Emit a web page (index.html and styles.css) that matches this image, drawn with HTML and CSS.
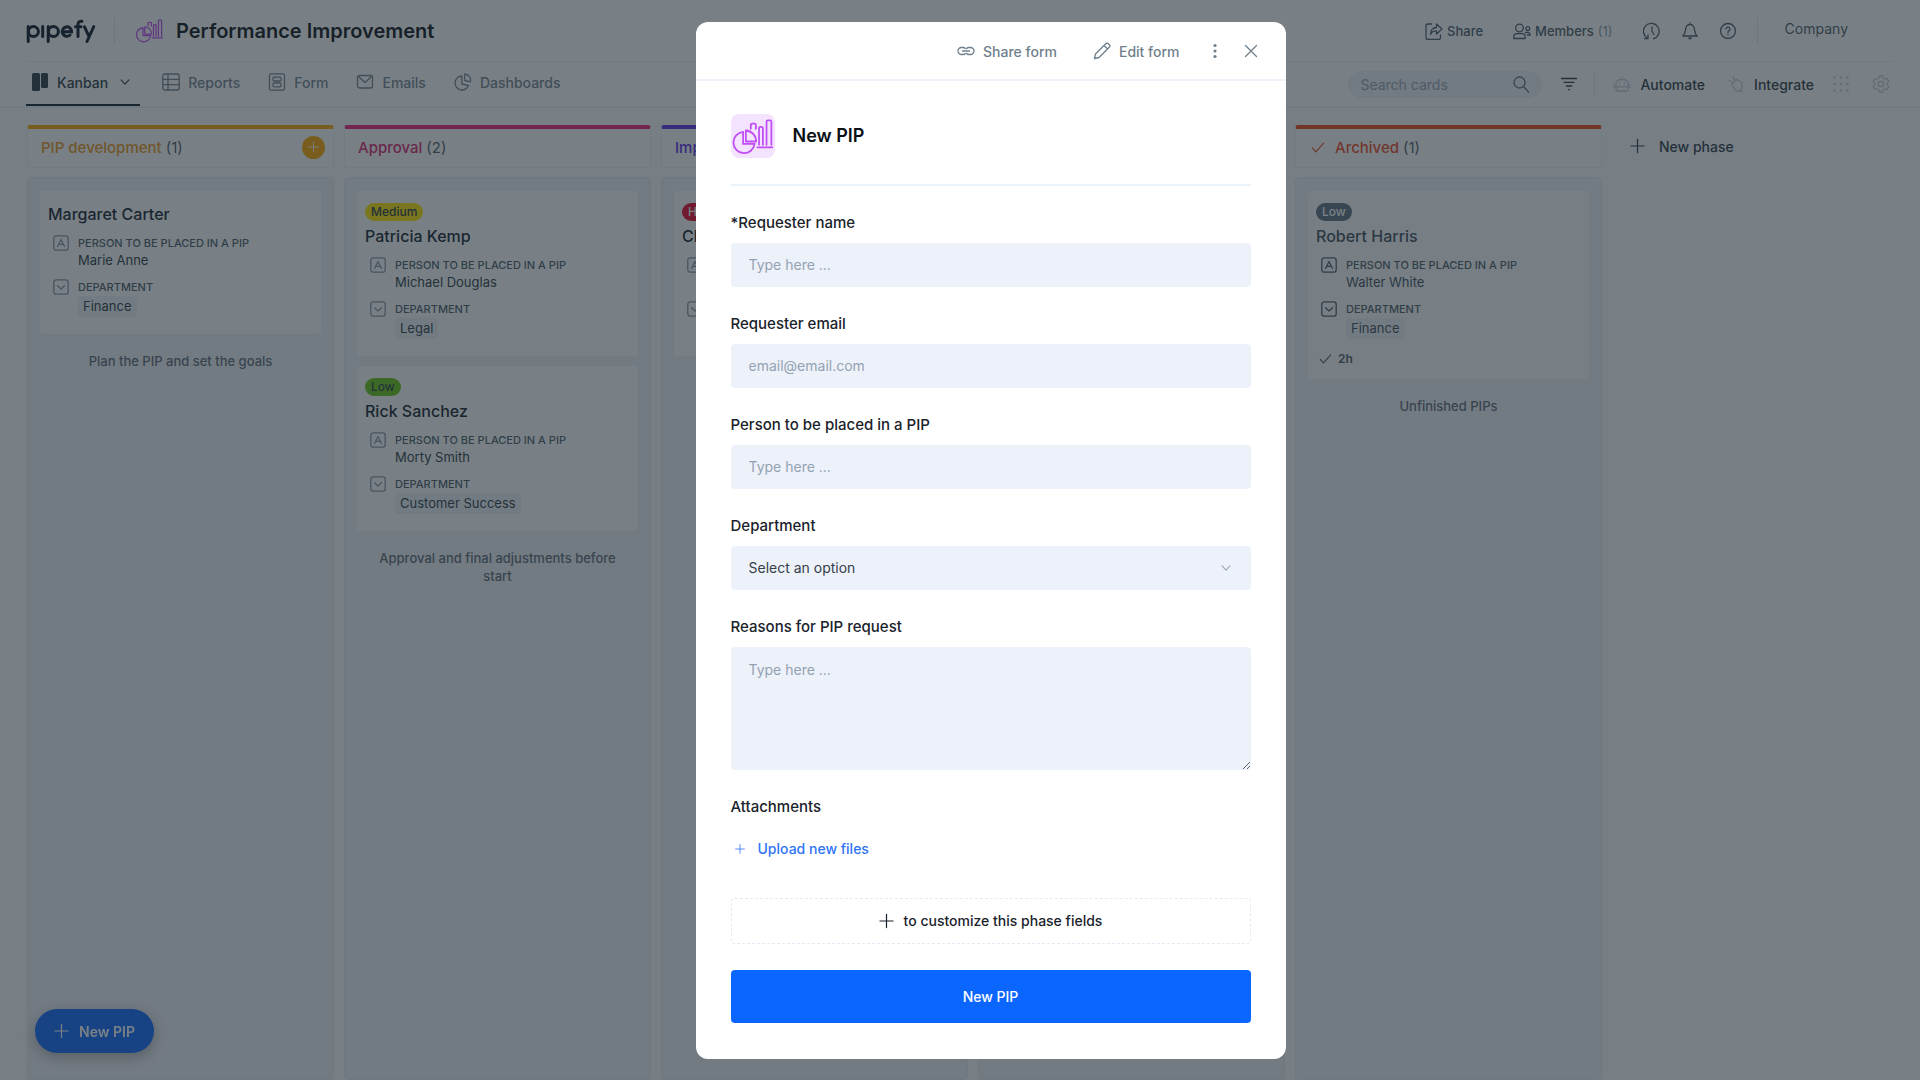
FILE: index.html
```html
<!DOCTYPE html>
<html lang="en">
<head>
    <meta charset="UTF-8">
    <meta name="viewport" content="width=device-width, initial-scale=1.0">
    <title>Performance Improvement - Pipefy</title>
    <link rel="stylesheet" href="styles.css">
</head>
<body>
    <!-- icons used more than once -->
    <svg class="sprite" aria-hidden="true">
        <symbol id="i-plus" viewBox="0 0 16 16"><path d="M8 1v14M1 8h14"/></symbol>
        <symbol id="i-check" viewBox="0 0 16 16"><path d="M1.500 9l4 4.500L14.500 3.500"/></symbol>
        <symbol id="i-chevron" viewBox="0 0 16 16"><path d="M3.500 5.500L8 10.500l4.500-5"/></symbol>
        <symbol id="i-text" viewBox="0 0 16 16"><rect x=".8" y=".8" width="14.400" height="14.400" rx="2.500"/><path d="M4.500 11.500L8 4.500l3.500 7M5.800 9.300h4.400"/></symbol>
        <symbol id="i-select" viewBox="0 0 16 16"><rect x=".8" y=".8" width="14.400" height="14.400" rx="2.500"/><path d="M4.500 6.800L8 10l3.500-3.200"/></symbol>
        <symbol id="i-pipe" viewBox="0 0 40 40"><path d="M11 16.200a9.700 9.700 0 1 0 10.500 11H11z"/><path d="M13.500 15v10h9.300A9.800 9.800 0 0 0 13.500 15z"/><path d="M18 13.500V10a1.300 1.300 0 0 1 1.300-1.300h2A1.300 1.300 0 0 1 22.600 10v3.500"/><path d="M25.500 28V13a1.200 1.200 0 0 1 1.200-1.200h1.100A1.200 1.200 0 0 1 29 13V28M32.300 28V7a1.300 1.300 0 0 1 1.300-1.300h1.800A1.300 1.300 0 0 1 36.700 7V28M24 30.300h13.500"/></symbol>
    </svg>

    <div class="page">
        <header class="topbar">
            <div class="topbar-row">
                <a href="#" class="logo" aria-label="pipefy">
                    <svg viewBox="0 0 70 26" fill="none" stroke="currentColor" stroke-width="3" stroke-linecap="round">
                        <path d="M2.200 8.500V23.500M16.700 8.500v10M22.200 8.500v15"/>
                        <circle cx="7.400" cy="13.500" r="5"/><circle cx="27.400" cy="13.500" r="5"/>
                        <path d="M36.600 13.700h9a4.700 4.700 0 1 0-1.500 3.300M52 18.500V6.500Q52 3 56 3.200M49.500 8.800h5.500M58.500 8.800l4.200 9M67.800 8.500L61 23.500"/>
                    </svg>
                </a>
                <span class="divider"></span>
                <svg class="icon pipe-icon"><use href="#i-pipe"/></svg>
                <h1>Performance Improvement</h1>
                <div class="actions">
                    <button type="button"><svg class="icon" viewBox="0 0 18 18"><path d="M6.500 2H3a2 2 0 0 0-2 2v11.500a2 2 0 0 0 2 2h10.500a2 2 0 0 0 2-2V13"/><path d="M5.500 12.500C5.500 8 7.500 5.500 11.500 5.500V2l5.500 5-5.500 5V8.800c-3 0-5 1-6 3.700z"/></svg>Share</button>
                    <button type="button" class="members"><svg class="icon" viewBox="0 0 18 18"><circle cx="6.500" cy="6" r="3.800"/><path d="M.8 16.500V15c0-2.300 1.700-3.300 3.200-3.300h5c1.500 0 3.200 1 3.200 3.300v1.500z"/><circle cx="14.800" cy="6.500" r="1.900"/><path d="M12.300 10.800c1.500-1 5-.8 5 2.200h-3"/></svg>Members <span class="muted">(1)</span></button>
                    <button type="button" aria-label="Activity"><svg class="icon" viewBox="0 0 18 18"><path d="M5 16.300A7.800 7.800 0 1 1 10.500 16.700M1.500 16.700H5V13M9 5v4.500l2 3"/></svg></button>
                    <button type="button" aria-label="Notifications"><svg class="icon" viewBox="0 0 18 18"><path d="M1.800 14c2.400-2 2.200-3.500 2.700-6.500.4-3 2.500-5 4.500-5s4.100 2 4.500 5c.5 3 .3 4.500 2.700 6.500zM9 2.500V1M8 15.800h2v.7H8z"/></svg></button>
                    <button type="button" aria-label="Help"><svg class="icon" viewBox="0 0 18 18"><circle cx="9" cy="9" r="7.500"/><path d="M7 7a2 2 0 1 1 2.800 1.900Q9 9.300 9 10.500M9 12.300v.5"/></svg></button>
                    <span class="divider"></span>
                    <a href="#" class="company">Company</a>
                </div>
            </div>
            <div class="topbar-row tabs-row">
                <nav class="tabs">
                    <a href="#" class="tab active"><svg class="icon solid" viewBox="0 0 18 18"><rect x="1" y="0" width="8" height="18" rx="1.500"/><rect x="10" y="0" width="7" height="15" rx="1.500"/></svg>Kanban<svg class="icon chevron"><use href="#i-chevron"/></svg></a>
                    <a href="#" class="tab"><svg class="icon" viewBox="0 0 18 18"><rect x=".8" y="1" width="16.400" height="16" rx="2"/><path d="M6 1v16M1 6.300h16M1 11.700h16"/></svg>Reports</a>
                    <a href="#" class="tab"><svg class="icon" viewBox="0 0 18 18"><rect x="1.500" y=".8" width="15" height="16.400" rx="1.500"/><rect x="5" y="4.200" width="8" height="3.800" rx="1"/><rect x="5" y="10" width="8" height="3.800" rx="1"/></svg>Form</a>
                    <a href="#" class="tab"><svg class="icon" viewBox="0 0 18 18"><rect x="1.500" y="2.500" width="15" height="12.500" rx="2"/><path d="M2.500 3.500L9 9.500l6.500-6"/></svg>Emails</a>
                    <a href="#" class="tab"><svg class="icon" viewBox="0 0 18 18"><path d="M7.800 3a7 7 0 1 0 6.800 9.500L7.800 11z"/><path d="M10.800 1v6.500l5.700 1.300C17.500 5 15 1.500 10.800 1z"/></svg>Dashboards</a>
                </nav>
                <div class="tools">
                    <label class="search">
                        <input type="search" placeholder="Search cards" aria-label="Search cards">
                        <svg class="icon" viewBox="0 0 18 18"><circle cx="7.500" cy="7.500" r="5.500"/><path d="M11.500 11.500l5 5.500"/></svg>
                    </label>
                    <button type="button" aria-label="Filter"><svg class="icon" viewBox="0 0 18 18"><path d="M1.500 3.500h15M4 7.300h10M6.300 11h5.400M8.700 14.700h.6"/></svg></button>
                    <span class="divider"></span>
                    <button type="button" class="tool"><svg class="icon faint" viewBox="0 0 18 18"><path d="M3 8.500C3 6 5.500 4.500 9 4.500s6 1.500 6 4V14a2 2 0 0 1-2 2H5a2 2 0 0 1-2-2zM1.200 9.500v3M16.800 9.500v3M9 4.500V2.500M6.500 8v1M11.500 8v1M3 11.800h12"/></svg>Automate</button>
                    <button type="button" class="tool"><svg class="icon faint" viewBox="0 0 18 18"><path d="M6 1.500l2 3.500M2 5.500l3.500 2M4.500 9L10 4.500l5 3V13l-2.500 3H9zM13 15l2 2"/></svg>Integrate</button>
                    <button type="button" aria-label="Apps"><svg class="icon faint dots" viewBox="0 0 18 18"><path d="M2.500 2.500h.01M9 2.500h.01M15.500 2.500h.01M2.500 9h.01M9 9h.01M15.500 9h.01M2.500 15.500h.01M9 15.500h.01M15.500 15.500h.01"/></svg></button>
                    <button type="button" class="settings" aria-label="Settings"><svg class="icon faint" viewBox="0 0 18 18"><circle cx="9" cy="9" r="2.700"/><path d="M7.300 1h3.400l.6 2.300 1.600.9 2.300-.7 1.700 2.900-1.700 1.700v1.800l1.700 1.700-1.700 2.900-2.300-.7-1.600.9-.6 2.300H7.300l-.6-2.300-1.600-.9-2.300.7-1.700-2.900 1.700-1.700V8.100L1.100 6.400l1.700-2.900 2.300.7 1.600-.9z"/></svg></button>
                </div>
            </div>
        </header>

        <main class="board">
            <section class="phase">
                <header class="phase-head orange">
                    <h2>PIP development <span>(1)</span></h2>
                    <button type="button" class="add" aria-label="Add card"><svg class="icon"><use href="#i-plus"/></svg></button>
                </header>
                <div class="phase-body">
                    <article class="card">
                        <h3>Margaret Carter</h3>
                        <dl>
                            <dt><svg class="icon"><use href="#i-text"/></svg>Person to be placed in a PIP</dt>
                            <dd>Marie Anne</dd>
                            <dt><svg class="icon"><use href="#i-select"/></svg>Department</dt>
                            <dd><span class="chip">Finance</span></dd>
                        </dl>
                    </article>
                    <p class="hint">Plan the PIP and set the goals</p>
                </div>
            </section>

            <section class="phase">
                <header class="phase-head pink">
                    <h2>Approval <span>(2)</span></h2>
                </header>
                <div class="phase-body">
                    <article class="card">
                        <span class="tag medium">Medium</span>
                        <h3>Patricia Kemp</h3>
                        <dl>
                            <dt><svg class="icon"><use href="#i-text"/></svg>Person to be placed in a PIP</dt>
                            <dd>Michael Douglas</dd>
                            <dt><svg class="icon"><use href="#i-select"/></svg>Department</dt>
                            <dd><span class="chip">Legal</span></dd>
                        </dl>
                    </article>
                    <article class="card">
                        <span class="tag low">Low</span>
                        <h3>Rick Sanchez</h3>
                        <dl>
                            <dt><svg class="icon"><use href="#i-text"/></svg>Person to be placed in a PIP</dt>
                            <dd>Morty Smith</dd>
                            <dt><svg class="icon"><use href="#i-select"/></svg>Department</dt>
                            <dd><span class="chip">Customer Success</span></dd>
                        </dl>
                    </article>
                    <p class="hint">Approval and final adjustments before start</p>
                </div>
            </section>

            <section class="phase">
                <header class="phase-head purple">
                    <h2>Imp</h2>
                </header>
                <div class="phase-body">
                    <article class="card">
                        <span class="tag high">High</span>
                        <h3>Cl</h3>
                        <dl>
                            <dt><svg class="icon"><use href="#i-text"/></svg></dt>
                            <dd></dd>
                            <dt><svg class="icon"><use href="#i-select"/></svg></dt>
                            <dd class="chip-row"></dd>
                        </dl>
                    </article>
                </div>
            </section>

            <section class="phase">
                <header class="phase-head"></header>
                <div class="phase-body"></div>
            </section>

            <section class="phase">
                <header class="phase-head red">
                    <svg class="icon"><use href="#i-check"/></svg>
                    <h2>Archived <span>(1)</span></h2>
                </header>
                <div class="phase-body">
                    <article class="card done">
                        <span class="tag grey">Low</span>
                        <h3>Robert Harris</h3>
                        <dl>
                            <dt><svg class="icon"><use href="#i-text"/></svg>Person to be placed in a PIP</dt>
                            <dd>Walter White</dd>
                            <dt><svg class="icon"><use href="#i-select"/></svg>Department</dt>
                            <dd><span class="chip">Finance</span></dd>
                        </dl>
                        <p class="time"><svg class="icon"><use href="#i-check"/></svg>2h</p>
                    </article>
                    <p class="hint">Unfinished PIPs</p>
                </div>
            </section>

            <button type="button" class="new-phase"><svg class="icon"><use href="#i-plus"/></svg>New phase</button>
        </main>

        <button type="button" class="fab"><svg class="icon"><use href="#i-plus"/></svg>New PIP</button>
    </div>

    <div class="overlay">
        <div class="modal" role="dialog" aria-modal="true" aria-labelledby="modal-title">
            <div class="modal-bar">
                <button type="button" class="text-btn"><svg class="icon" viewBox="0 0 18 18"><path d="M8.300 11.500c-.6.800-1.200 1-2 1H4.500a3.500 3.500 0 0 1 0-7h1.800c.8 0 1.400.2 2 1M9.700 11.500c.6.800 1.200 1 2 1h1.800a3.500 3.500 0 0 0 0-7h-1.800c-.8 0-1.400.2-2 1M5.500 9h7"/></svg>Share form</button>
                <button type="button" class="text-btn"><svg class="icon" viewBox="0 0 18 18"><path d="M1.500 16.500l1-4.500L13 1.500a1.500 1.500 0 0 1 2 0L16.500 3a1.500 1.500 0 0 1 0 2L6 15.500zM11 3.500L14.500 7"/></svg>Edit form</button>
                <button type="button" aria-label="More"><svg class="icon solid" viewBox="0 0 18 18"><circle cx="9" cy="3.500" r="1.600"/><circle cx="9" cy="9" r="1.600"/><circle cx="9" cy="14.500" r="1.600"/></svg></button>
                <button type="button" aria-label="Close"><svg class="icon" viewBox="0 0 18 18"><path d="M3.500 3.500l11 11M14.500 3.500l-11 11"/></svg></button>
            </div>
            <form class="modal-form">
                <div class="modal-title">
                    <svg class="pipe-badge"><use href="#i-pipe"/></svg>
                    <h2 id="modal-title">New PIP</h2>
                </div>

                <label for="name">*Requester name</label>
                <input type="text" id="name" name="name" placeholder="Type here ..." required>

                <label for="email">Requester email</label>
                <input type="email" id="email" name="email" placeholder="email@email.com">

                <label for="person">Person to be placed in a PIP</label>
                <input type="text" id="person" name="person" placeholder="Type here ...">

                <label for="department">Department</label>
                <div class="select-wrap">
                    <select id="department" name="department">
                        <option>Select an option</option>
                        <option>Finance</option>
                        <option>Legal</option>
                        <option>Customer Success</option>
                    </select>
                    <svg class="icon"><use href="#i-chevron"/></svg>
                </div>

                <label for="reasons">Reasons for PIP request</label>
                <textarea id="reasons" name="reasons" placeholder="Type here ..."></textarea>

                <span class="label">Attachments</span>
                <button type="button" class="upload"><svg class="icon"><use href="#i-plus"/></svg>Upload new files</button>

                <button type="button" class="customize"><svg class="icon"><use href="#i-plus"/></svg>to customize this phase fields</button>
                <button type="submit" class="submit">New PIP</button>
            </form>
        </div>
    </div>
</body>
</html>
```
FILE: styles.css
```css
* {
    box-sizing: border-box;
}
body {
    margin: 0;
    font-family: Inter, sans-serif;
    font-size: 14px;
    color: #2b3a44;
    background-color: #fafbfd;
}
h1, h2, h3, p, dl, dd {
    margin: 0;
}
a {
    color: inherit;
    text-decoration: none;
}
button, input, select, textarea {
    font-family: inherit;
    font-size: 14px;
    color: inherit;
    border: none;
    background: none;
}
button {
    display: flex;
    align-items: center;
    padding: 0;
    font-weight: 500;
    cursor: pointer;
}
.sprite {
    display: none;
}
.icon {
    width: 18px;
    height: 18px;
    flex: none;
    fill: none;
    stroke: currentColor;
    stroke-width: 1.3;
    stroke-linecap: round;
    stroke-linejoin: round;
}
.solid {
    fill: currentColor;
    stroke: none;
}
.faint {
    color: #c5ccd8;
}
.dots {
    stroke-width: 2.4;
}
.divider {
    width: 1px;
    height: 27px;
    background-color: #dfe5ee;
}

/* page */
.page {
    height: 100vh;
    display: flex;
    flex-direction: column;
    overflow: hidden;
}
.topbar {
    background-color: #fff;
    padding: 0 26px;
    border-bottom: 2px solid #eceff5;
}
.topbar-row {
    height: 62px;
    display: flex;
    align-items: center;
    border-bottom: 1px solid #edf0f6;
}
.logo svg {
    display: block;
    width: 70px;
    height: 26px;
    color: #0a1528;
}
.logo + .divider {
    margin: 0 20px 0 18px;
}
.pipe-icon {
    width: 29px;
    height: 29px;
    color: #c04df5;
    stroke-width: 1.8;
}
h1 {
    margin-left: 12px;
    font-size: 20px;
    font-weight: 600;
    color: #0b1016;
}
.actions {
    display: flex;
    align-items: center;
    margin-left: auto;
    gap: 20px;
    color: #4a5a68;
}
.actions button {
    gap: 4px;
    font-size: 13px;
}
.actions .members {
    margin: 0 10px;
}
.muted {
    font-weight: 400;
    color: #8c9cac;
}
.company {
    padding: 0 46px 4px 7px;
}
.tabs-row {
    height: 44px;
    border: none;
}
.tabs {
    display: flex;
    gap: 22px;
    height: 44px;
}
.tab {
    display: flex;
    align-items: center;
    gap: 8px;
    padding: 0 6px 4px 0;
    font-weight: 500;
    color: #73828f;
}
.tab.active {
    padding: 0 8px 2px 5px;
    color: #2b3a44;
    border-bottom: 2px solid #10202c;
}
.tab.active .chevron {
    width: 14px;
    margin-left: 2px;
}
.tools {
    display: flex;
    align-items: center;
    gap: 18px;
    margin-left: auto;
    padding-right: 4px;
}
.tools .divider {
    margin-left: -2px;
}
.search {
    display: flex;
    align-items: center;
    width: 194px;
    height: 27px;
    padding: 0 12px;
    border-radius: 14px;
    background-color: #edf0f7;
    color: #5c6c7c;
}
.search input {
    flex: 1;
    min-width: 0;
    padding: 0;
}
::placeholder {
    color: #93a2b3;
    opacity: 1;
}
.tool {
    gap: 9px;
}
.tool + .tool, .settings {
    margin-left: 4px;
}

/* board */
.board {
    flex: 1;
    display: flex;
    gap: 10px;
    padding: 17px 27px 0;
}
.phase {
    width: 307px;
    display: flex;
    flex-direction: column;
    gap: 9px;
}
.phase-head {
    height: 43px;
    display: flex;
    align-items: center;
    gap: 8px;
    padding: 0 8px 2px 13px;
    background-color: #fff;
    border: 1px solid #f0f3f7;
    border-top: 4px solid #dde3ec;
    border-radius: 3px;
}
.phase-head h2 {
    font-size: 15px;
    font-weight: 500;
}
.phase-head h2 span {
    font-weight: 400;
    color: #4a5a68;
}
.phase-head.orange {
    color: #e8961a;
    border-top-color: #ffa800;
}
.phase-head.pink {
    color: #d8246c;
    border-top-color: #f01c80;
}
.phase-head.purple {
    color: #5a2bea;
    border-top-color: #5a2bea;
}
.phase-head.red {
    color: #e8491f;
    border-top-color: #f04410;
}
.phase-head > .icon {
    width: 14px;
    margin: 0 2px;
}
.add {
    justify-content: center;
    width: 23px;
    height: 23px;
    margin-left: auto;
    border-radius: 50%;
    background-color: #ffa800;
    color: #fff;
}
.add .icon {
    width: 11px;
}
.phase-body {
    flex: 1;
    display: flex;
    flex-direction: column;
    gap: 10px;
    padding: 13px 12px;
    background-color: #f0f2f7;
    border: 1px solid #e6eaf1;
    border-radius: 4px;
}
.card {
    padding: 12px 8px 17px;
    background-color: #fff;
    border-radius: 4px;
}
.card h3 {
    font-size: 16px;
    font-weight: 500;
    line-height: 22px;
    color: #10202c;
}
.tag {
    display: table;
    padding: 0 6px;
    margin-bottom: 4px;
    border-radius: 9px;
    font-size: 12px;
    font-weight: 500;
    line-height: 18px;
}
.medium {
    background-color: #ffe600;
}
.low {
    background-color: #68c812;
}
.high {
    background-color: #e8042c;
    color: #fff;
}
.grey {
    background-color: #5a6e80;
    color: #fff;
}
.card dt {
    display: flex;
    align-items: center;
    gap: 9px;
    height: 18px;
    margin: 9px 0 0 5px;
    font-size: 11px;
    font-weight: 500;
    color: #4a5a68;
    text-transform: uppercase;
}
.card dt .icon {
    width: 16px;
    height: 16px;
    color: #8494a4;
}
.card dd {
    min-height: 17px;
    margin-left: 30px;
    font-size: 13px;
    line-height: 17px;
}
.card .chip-row {
    min-height: 21px;
}
.chip {
    display: inline-block;
    padding: 2px 5px;
    border-radius: 4px;
    background-color: #f0f3f8;
}
.card.done {
    padding-bottom: 13px;
    background-color: #fafbfc;
}
.done h3, .done dd {
    color: #3c4c5a;
}
.done dt .icon {
    color: #4a5a68;
}
.time {
    display: flex;
    align-items: center;
    gap: 6px;
    margin: 12px 0 0 3px;
    font-size: 12px;
    font-weight: 600;
    color: #4a5a68;
}
.time .icon {
    width: 13px;
    height: 13px;
}
.hint {
    padding: 8px 16px;
    font-size: 13px;
    font-weight: 500;
    line-height: 18px;
    text-align: center;
    color: #5a6a78;
}
.new-phase {
    align-self: flex-start;
    gap: 14px;
    height: 42px;
    margin-left: 18px;
}
.new-phase .icon {
    width: 15px;
}
.fab {
    position: fixed;
    left: 35px;
    bottom: 27px;
    gap: 10px;
    height: 44px;
    padding: 0 19px;
    border-radius: 22px;
    background-color: #0b66ff;
    color: #fff;
    font-weight: 600;
    box-shadow: 0 4px 14px rgba(0, 0, 0, 0.3);
}
.fab .icon {
    width: 15px;
}

/* modal */
.overlay {
    position: fixed;
    inset: 0;
    display: flex;
    align-items: center;
    justify-content: center;
    padding-left: 61px;
    background-color: rgba(32, 43, 51, 0.6);
}
.modal {
    width: 590px;
    background-color: #fff;
    border-radius: 12px;
}
.modal-bar {
    height: 59px;
    display: flex;
    align-items: center;
    justify-content: flex-end;
    gap: 18px;
    padding: 2px 26px 0;
    border-bottom: 2px solid #eef3fb;
    color: #6f7f8c;
}
.text-btn {
    gap: 8px;
    margin-right: 8px;
}
.text-btn + .text-btn {
    margin-left: 10px;
}
.modal-form {
    display: flex;
    flex-direction: column;
    padding: 33px 35px 36px;
    color: #1a232b;
}
.modal-title {
    display: flex;
    align-items: center;
    gap: 18px;
    padding-bottom: 26px;
    margin-bottom: 26px;
    border-bottom: 2px solid #eaf3fc;
}
.modal-title h2 {
    font-size: 18px;
    font-weight: 600;
    color: #0b1016;
}
.pipe-badge {
    width: 44px;
    height: 44px;
    border-radius: 8px;
    background-color: #f4e3fe;
    fill: none;
    stroke: #c04df5;
    stroke-width: 1.6;
    stroke-linecap: round;
    stroke-linejoin: round;
}
.modal-form label, .label {
    margin-bottom: 9px;
    font-size: 15px;
    font-weight: 500;
    line-height: 22px;
}
.modal-form input, .modal-form select, .modal-form textarea {
    width: 100%;
    height: 44px;
    margin: 0 0 26px;
    padding: 0 18px;
    border-radius: 4px;
    background-color: #edf1f9;
}
.modal-form textarea {
    height: 123px;
    padding: 14px 18px;
}
.select-wrap {
    position: relative;
}
.select-wrap select {
    appearance: none;
    color: #35404a;
}
.select-wrap .icon {
    position: absolute;
    right: 18px;
    top: 15px;
    width: 14px;
    height: 14px;
    color: #9aa8b5;
}
.upload {
    align-self: flex-start;
    gap: 13px;
    height: 22px;
    margin-top: 11px;
    padding-left: 4px;
    color: #2f74f5;
}
.upload .icon {
    width: 10px;
}
.customize {
    justify-content: center;
    gap: 10px;
    height: 46px;
    margin: 38px 0 26px;
    border: 1px dashed #e3ecf4;
    border-radius: 4px;
}
.customize .icon {
    width: 15px;
}
.submit {
    justify-content: center;
    height: 53px;
    border-radius: 4px;
    background-color: #0b66ff;
    color: #fff;
}
```
